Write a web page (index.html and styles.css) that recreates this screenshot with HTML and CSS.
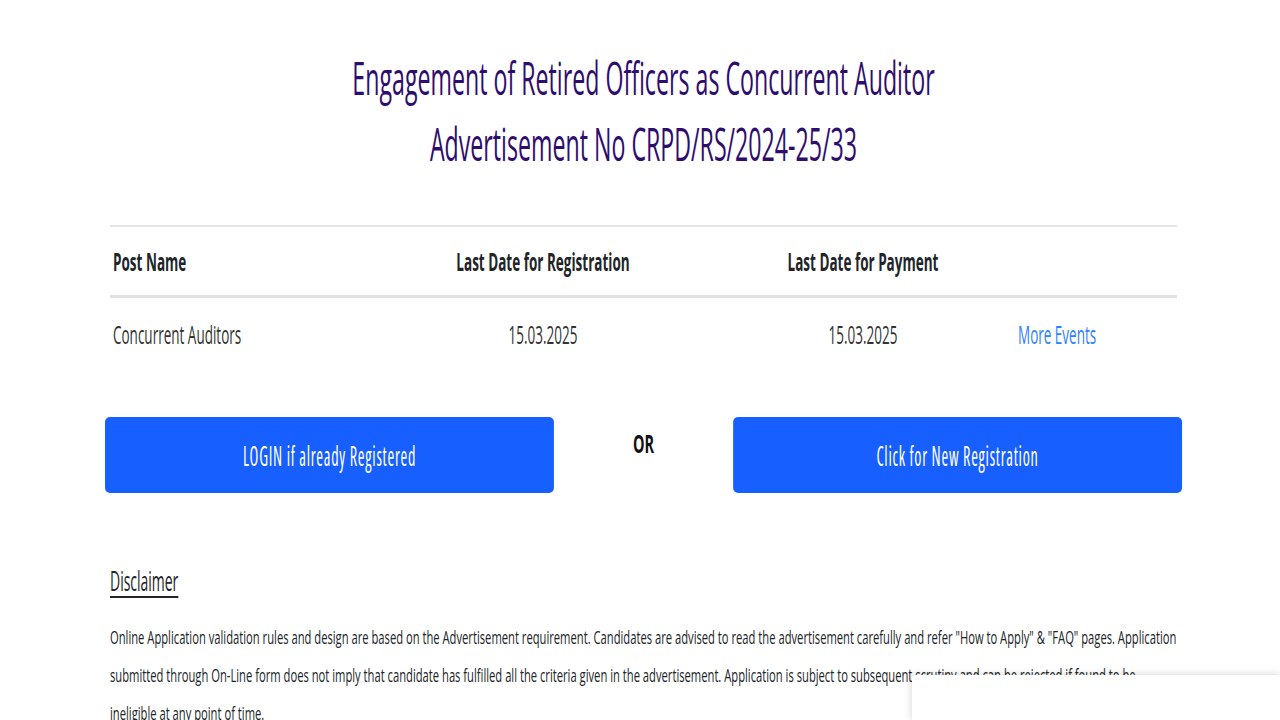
FILE: index.html
```html
<!DOCTYPE html>
<html lang="en">
<head>
  <meta charset="UTF-8">
  <title>Concurrent Auditor - Online Registration</title>
  <link rel="stylesheet" href="styles.css">
</head>
<body>

  <div class="container">

    <!-- Judul iklan -->
    <h2 class="title squeeze">Engagement of Retired Officers as Concurrent Auditor<br>Advertisement No CRPD/RS/2024-25/33</h2>

    <div class="events squeeze">
      <div class="events-row events-head">
        <div class="cell">Post Name</div>
        <div class="cell center">Last Date for Registration</div>
        <div class="cell center">Last Date for Payment</div>
        <div class="cell"></div>
      </div>
      <div class="events-row">
        <div class="cell">Concurrent Auditors</div>
        <div class="cell center">15.03.2025</div>
        <div class="cell center">15.03.2025</div>
        <div class="cell"><a class="more-link" href="#">More Events</a></div>
      </div>
    </div>

    <div class="actions squeeze">
      <a class="btn-main" href="#">LOGIN if already Registered</a>
      <div class="or">OR</div>
      <a class="btn-main" href="#">Click for New Registration</a>
    </div>

    <div class="disclaimer">
      <h4 class="squeeze">Disclaimer</h4>
      <p class="squeeze">Online Application validation rules and design are based on the Advertisement requirement. Candidates are advised to read the advertisement carefully and refer "How to Apply" &amp; "FAQ" pages. Application submitted through On-Line form does not imply that candidate has fulfilled all the criteria given in the advertisement. Application is subject to subsequent scrutiny and can be rejected if found to be ineligible at any point of time.</p>
    </div>

  </div>

  <div class="popup"></div>

</body>
</html>
```

FILE: styles.css
```css
body {
  margin: 0;
  font-family: 'Open Sans', 'Noto Sans', sans-serif;
  background-color: #ffffff;
  color: #212529;
  overflow-x: hidden;
}

.container {
  margin-left: 105px;
  width: 1077px;
  padding-top: 44px;
}

/* teks dipadatkan mendatar, --sx diatur per blok */
.squeeze {
  --sx: 0.58;
  --u: calc(1px / var(--sx));
  width: calc(100% / var(--sx));
  transform: scaleX(var(--sx));
  transform-origin: 0 0;
}

.title {
  --sx: 0.504;
  margin: 0;
  font-size: 46px;
  line-height: 66px;
  font-weight: 400;
  color: #2f0d6d;
  text-align: center;
}

.events {
  --sx: 0.54;
  width: calc((100% - 10px) / var(--sx));
  margin: 49px 0 0 5px;
  border-top: 2px solid #e3e5e9;
}

.events-row {
  display: grid;
  grid-template-columns: calc(268 * var(--u)) calc(330 * var(--u)) calc(310 * var(--u)) 1fr;
  font-size: 25px;
  line-height: 34px;
  padding: 19px 0 17px;
  color: #333;
}

.events-head {
  padding: 17px 0;
  border-bottom: 3px solid #dfe1e5;
  font-weight: 700;
  color: #212529;
}

.cell {
  padding-left: calc(3 * var(--u));
}

.cell.center {
  text-align: center;
  padding-left: 0;
}

.more-link {
  color: #2f80ff;
  text-decoration: none;
  margin-left: calc(-3 * var(--u));
}

.actions {
  display: grid;
  grid-template-columns: calc(449 * var(--u)) 1fr calc(449 * var(--u));
  margin-top: 49px;
}

.btn-main {
  height: 76px;
  display: flex;
  align-items: center;
  justify-content: center;
  background-color: #1760ff;
  color: white;
  font-size: 28px;
  font-stretch: 75%;
  letter-spacing: 0.045em;
  text-decoration: none;
  border-radius: calc(5 * var(--u)) / 5px;
}

.or {
  margin-top: 9px;
  font-size: 25px;
  line-height: 34px;
  font-weight: 700;
  text-align: center;
  color: #111;
}

.disclaimer {
  padding: 0 5px;
}

.disclaimer h4 {
  --sx: 0.499;
  margin: 68px 0 0;
  font-size: 28px;
  line-height: 38px;
  font-weight: 400;
  text-decoration: underline;
  text-underline-offset: 5px;
}

.disclaimer p {
  --sx: 0.6056;
  margin: 19px 0 0;
  font-size: 18.5px;
  line-height: 38px;
}

.popup {
  position: fixed;
  left: 912px;
  top: 675px;
  width: 368px;
  height: 45px;
  background: #fff;
  border-radius: 4px 0 0 0;
  box-shadow: 0 0 8px rgba(0, 0, 0, 0.18);
}
```
